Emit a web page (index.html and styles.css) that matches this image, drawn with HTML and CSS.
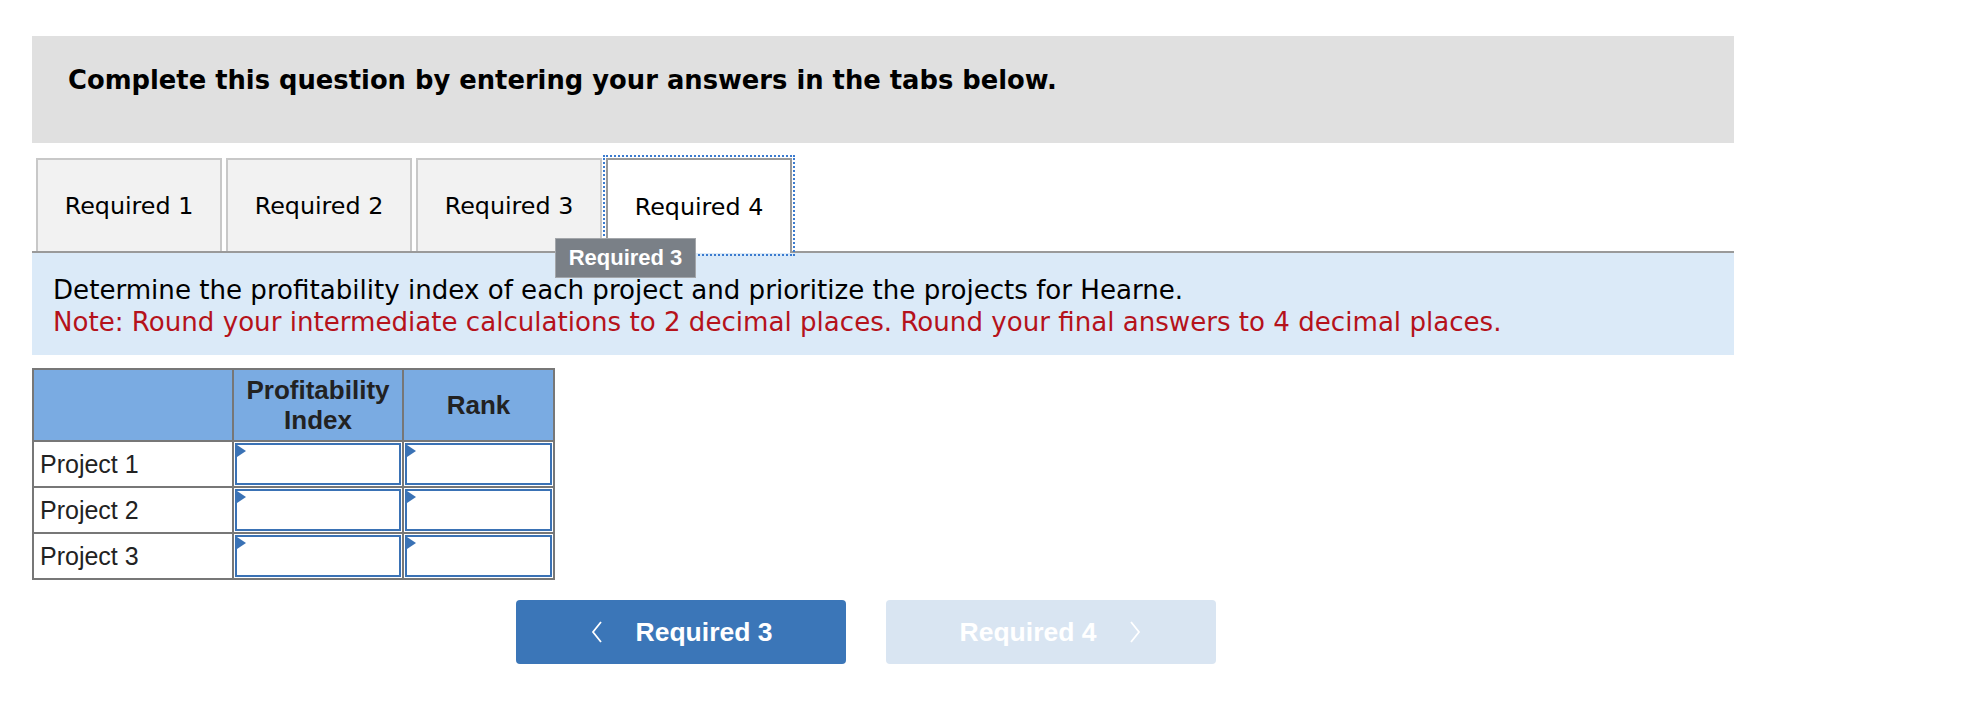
FILE: index.html
```html
<!DOCTYPE html>
<html lang="en">

<head>
    <meta charset="UTF-8">
    <meta name="viewport" content="width=device-width, initial-scale=1.0">
    <title>Profitability Index</title>
    <link rel="stylesheet" href="styles.css">
</head>

<body>
    <div class="page">
        <div class="intro">
            <h2>Complete this question by entering your answers in the tabs below.</h2>
        </div>

        <div class="tabs">
            <button class="tab">Required 1</button>
            <button class="tab">Required 2</button>
            <button class="tab">Required 3</button>
            <button class="tab active">Required 4</button>
            <span class="tooltip">Required 3</span>
        </div>

        <div class="prompt">
            <p>Determine the profitability index of each project and prioritize the projects for Hearne.</p>
            <p class="note">Note: Round your intermediate calculations to 2 decimal places. Round your final answers to 4 decimal places.</p>
        </div>

        <table class="answers">
            <tr>
                <th class="col-name"></th>
                <th class="col-index">Profitability<br>Index</th>
                <th class="col-rank">Rank</th>
            </tr>
            <tr>
                <td class="label">Project 1</td>
                <td class="entry"><input type="text"></td>
                <td class="entry"><input type="text"></td>
            </tr>
            <tr>
                <td class="label">Project 2</td>
                <td class="entry"><input type="text"></td>
                <td class="entry"><input type="text"></td>
            </tr>
            <tr>
                <td class="label">Project 3</td>
                <td class="entry"><input type="text"></td>
                <td class="entry"><input type="text"></td>
            </tr>
        </table>

        <div class="nav">
            <button class="nav-btn prev">
                <svg width="14" height="22" viewBox="0 0 14 22"><polyline points="11,1 3,11 11,21" fill="none" stroke="#fff" stroke-width="1.8"/></svg>
                Required 3
            </button>
            <button class="nav-btn next">
                Required 4
                <svg width="14" height="22" viewBox="0 0 14 22"><polyline points="3,1 11,11 3,21" fill="none" stroke="#fff" stroke-width="1.8"/></svg>
            </button>
        </div>
    </div>
</body>

</html>
```

FILE: styles.css
```css
body {
    margin: 0;
    padding: 0;
    background-color: #fff;
    color: #000;
    font-family: "DejaVu Sans", Verdana, sans-serif;
}

.page {
    width: 1702px;
    padding: 36px 0 0 32px;
}

.intro {
    background-color: #e0e0e0;
    padding: 29px 36px 48px;
}

.intro h2 {
    margin: 0;
    font-size: 25.8px;
    font-weight: bold;
}

.tabs {
    position: relative;
    display: flex;
    align-items: flex-end;
    gap: 4px;
    margin-top: 15px;
    padding-left: 4px;
    border-bottom: 2px solid #9a9a9a;
}

.tab {
    width: 186px;
    height: 93px;
    box-sizing: border-box;
    background-color: #f2f2f2;
    border: 2px solid #c8c8c8;
    border-bottom: none;
    font-family: "DejaVu Sans", Verdana, sans-serif;
    font-size: 23.8px;
    color: #000;
    padding: 0;
    cursor: pointer;
}

.tab.active {
    background-color: #fff;
    border-color: #9a9a9a;
    height: 95px;
    margin-bottom: -2px;
    outline: 2px dotted #3b7bcf;
    outline-offset: 1px;
}

.tooltip {
    position: absolute;
    left: 523px;
    top: 80px;
    width: 141px;
    height: 40px;
    box-sizing: border-box;
    background-color: #7a8087;
    border: 1px solid #a3a6aa;
    color: #fff;
    font-family: "Liberation Sans", Arial, sans-serif;
    font-weight: bold;
    font-size: 22px;
    line-height: 38px;
    text-align: center;
    z-index: 2;
}

.prompt {
    background-color: #dbeaf8;
    padding: 21px 21px 17px;
    font-size: 26.1px;
    line-height: 32px;
}

.prompt p {
    margin: 0;
}

.prompt .note {
    color: #b5121b;
}

.answers {
    width: 523px;
    margin-top: 13px;
    border-collapse: collapse;
    font-family: "Liberation Sans", Arial, sans-serif;
    color: #222;
}

.answers th,
.answers td {
    border: 2px solid #777;
    padding: 0;
}

.answers th {
    background-color: #7aabe2;
    height: 70px;
    font-size: 26px;
    line-height: 30px;
    font-weight: bold;
    text-align: center;
}

.col-name {
    width: 198px;
}

.col-index {
    width: 168px;
}

.answers .label {
    height: 44px;
    padding-left: 6px;
    font-size: 25px;
}

.answers .entry {
    position: relative;
    padding: 1px;
}

.entry::before {
    content: "";
    position: absolute;
    left: 3px;
    top: 3px;
    border-left: 9px solid #3a72b5;
    border-top: 6px solid transparent;
    border-bottom: 6px solid transparent;
}

.entry input {
    display: block;
    width: 100%;
    height: 42px;
    box-sizing: border-box;
    border: 2px solid #3a72b5;
    background-color: #fff;
    margin: 0;
}

.nav {
    display: flex;
    gap: 40px;
    margin-top: 20px;
    padding-left: 484px;
}

.nav-btn {
    width: 330px;
    height: 64px;
    display: flex;
    align-items: center;
    justify-content: center;
    gap: 32px;
    border: none;
    border-radius: 4px;
    font-family: "Liberation Sans", Arial, sans-serif;
    font-weight: bold;
    font-size: 26.5px;
    color: #fff;
    cursor: pointer;
}

.nav-btn.prev {
    background-color: #3b76b8;
}

.nav-btn.next {
    background-color: #d9e5f2;
}
```
